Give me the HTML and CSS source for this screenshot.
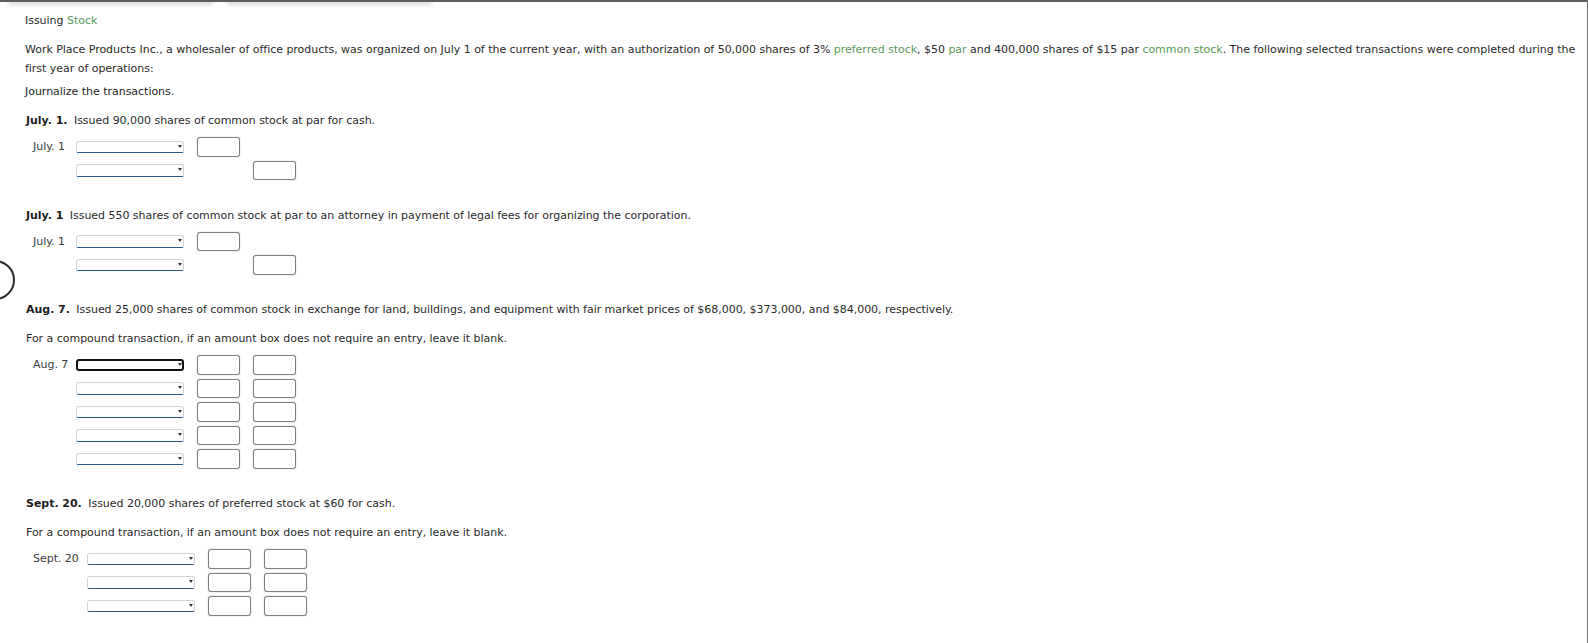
FILE: index.html
```html
<!DOCTYPE html>
<html lang="en">
<head>
<meta charset="utf-8">
<title>Issuing Stock</title>
<link rel="stylesheet" href="styles.css">
</head>
<body>
<div class="page">
  <div class="topbar"><div class="tab"></div><div class="tab"></div></div>
  <div class="ring"></div>
  <div class="content">
    <p class="head">Issuing <span class="g">Stock</span></p>
    <p class="intro">Work Place Products Inc., a wholesaler of office products, was organized on July 1 of the current year, with an authorization of 50,000 shares of 3% <span class="g">preferred stock</span>, $50 <span class="g">par</span> and 400,000 shares of $15 par <span class="g">common stock</span>. The following selected transactions were completed during the first year of operations:</p>
    <p class="instr">Journalize the transactions.</p>

    <section class="tx">
      <p class="title"><b>July. 1.</b> Issued 90,000 shares of common stock at par for cash.</p>
      <div class="je">
        <div class="date">July. 1</div><div class="acct"><div class="dd"></div></div><div class="amt"><input type="text"></div><div class="amt"></div>
        <div class="date"></div><div class="acct"><div class="dd"></div></div><div class="amt"></div><div class="amt"><input type="text"></div>
      </div>
    </section>

    <section class="tx">
      <p class="title"><b>July. 1</b> Issued 550 shares of common stock at par to an attorney in payment of legal fees for organizing the corporation.</p>
      <div class="je">
        <div class="date">July. 1</div><div class="acct"><div class="dd"></div></div><div class="amt"><input type="text"></div><div class="amt"></div>
        <div class="date"></div><div class="acct"><div class="dd"></div></div><div class="amt"></div><div class="amt"><input type="text"></div>
      </div>
    </section>

    <section class="tx">
      <p class="title"><b>Aug. 7.</b> Issued 25,000 shares of common stock in exchange for land, buildings, and equipment with fair market prices of $68,000, $373,000, and $84,000, respectively.</p>
      <p class="note">For a compound transaction, if an amount box does not require an entry, leave it blank.</p>
      <div class="je">
        <div class="date">Aug. 7</div><div class="acct"><div class="dd focus"></div></div><div class="amt"><input type="text"></div><div class="amt"><input type="text"></div>
        <div class="date"></div><div class="acct"><div class="dd"></div></div><div class="amt"><input type="text"></div><div class="amt"><input type="text"></div>
        <div class="date"></div><div class="acct"><div class="dd"></div></div><div class="amt"><input type="text"></div><div class="amt"><input type="text"></div>
        <div class="date"></div><div class="acct"><div class="dd"></div></div><div class="amt"><input type="text"></div><div class="amt"><input type="text"></div>
        <div class="date"></div><div class="acct"><div class="dd"></div></div><div class="amt"><input type="text"></div><div class="amt"><input type="text"></div>
      </div>
    </section>

    <section class="tx">
      <p class="title"><b>Sept. 20.</b> Issued 20,000 shares of preferred stock at $60 for cash.</p>
      <p class="note">For a compound transaction, if an amount box does not require an entry, leave it blank.</p>
      <div class="je">
        <div class="date">Sept. 20</div><div class="acct"><div class="dd"></div></div><div class="amt"><input type="text"></div><div class="amt"><input type="text"></div>
        <div class="date"></div><div class="acct"><div class="dd"></div></div><div class="amt"><input type="text"></div><div class="amt"><input type="text"></div>
        <div class="date"></div><div class="acct"><div class="dd"></div></div><div class="amt"><input type="text"></div><div class="amt"><input type="text"></div>
      </div>
    </section>
  </div>
</div>
</body>
</html>
```

FILE: styles.css
```css
html, body {
  margin: 0;
  padding: 0;
  background: #fff;
}
body {
  font-family: "DejaVu Sans", Verdana, sans-serif;
  font-size: 11px;
  letter-spacing: -0.03px;
  color: #2a2a2a;
}
.page {
  position: relative;
  width: 1588px;
  height: 643px;
  box-sizing: border-box;
  border-right: 1px solid #707070;
  overflow: hidden;
}
.topbar {
  height: 2px;
  background: #5e5e5e;
  display: flex;
  gap: 14px;
  padding-left: 8px;
}
.tab {
  width: 205px;
  height: 2px;
  background: #5e5e5e;
  border-radius: 0 0 4px 4px;
  box-shadow: 0 2px 4px rgba(0, 0, 0, 0.3);
}
.ring {
  position: absolute;
  left: -25px;
  top: 260px;
  width: 40px;
  height: 40px;
  box-sizing: border-box;
  border: 2px solid #2a2a2a;
  border-radius: 50%;
}
.content {
  padding: 9px 10px 0 25px;
}
p {
  margin: 0;
  line-height: 19px;
}
.g {
  color: #5b9b5b;
}
.head {
  margin-bottom: 10px;
}
.intro {
  margin-bottom: 4px;
}
.instr {
  margin-bottom: 10px;
  color: #1e1e1e;
}
.tx {
  margin-left: 1px;
  margin-bottom: 23.5px;
}
.title b {
  color: #1e1e1e;
  margin-right: 3px;
}
.note {
  margin-top: 10px;
}
.je {
  display: grid;
  grid-template-columns: auto 108px 56px 56px;
  grid-auto-rows: 23.5px;
  align-items: center;
  justify-content: start;
  margin-top: 5px;
}
.date {
  min-width: 35px;
  padding: 0 8px 0 7px;
  line-height: 19px;
  color: #3a3a3a;
  white-space: nowrap;
}
.amt {
  padding-left: 13px;
}
.amt input {
  display: block;
  width: 43px;
  height: 19.5px;
  box-sizing: border-box;
  margin: 0;
  padding: 0;
  border: 1px solid #808080;
  border-radius: 3px;
  background: #fff;
  box-shadow: 0 0 1px rgba(0, 0, 0, 0.5);
}
.dd {
  position: relative;
  height: 12.5px;
  box-sizing: border-box;
  background: #fff;
  border: 1px solid #d2d2d2;
  border-bottom: 1px solid #2b5a88;
  border-radius: 3px 3px 2px 2px;
}
.dd::after {
  content: "";
  position: absolute;
  right: 1px;
  top: 3px;
  border-left: 2.5px solid transparent;
  border-right: 2.5px solid transparent;
  border-top: 3px solid #333;
}
.dd.focus {
  border: 2px solid #111;
  border-radius: 3px;
}
.dd.focus::after {
  right: 0;
  top: 2px;
}
```
